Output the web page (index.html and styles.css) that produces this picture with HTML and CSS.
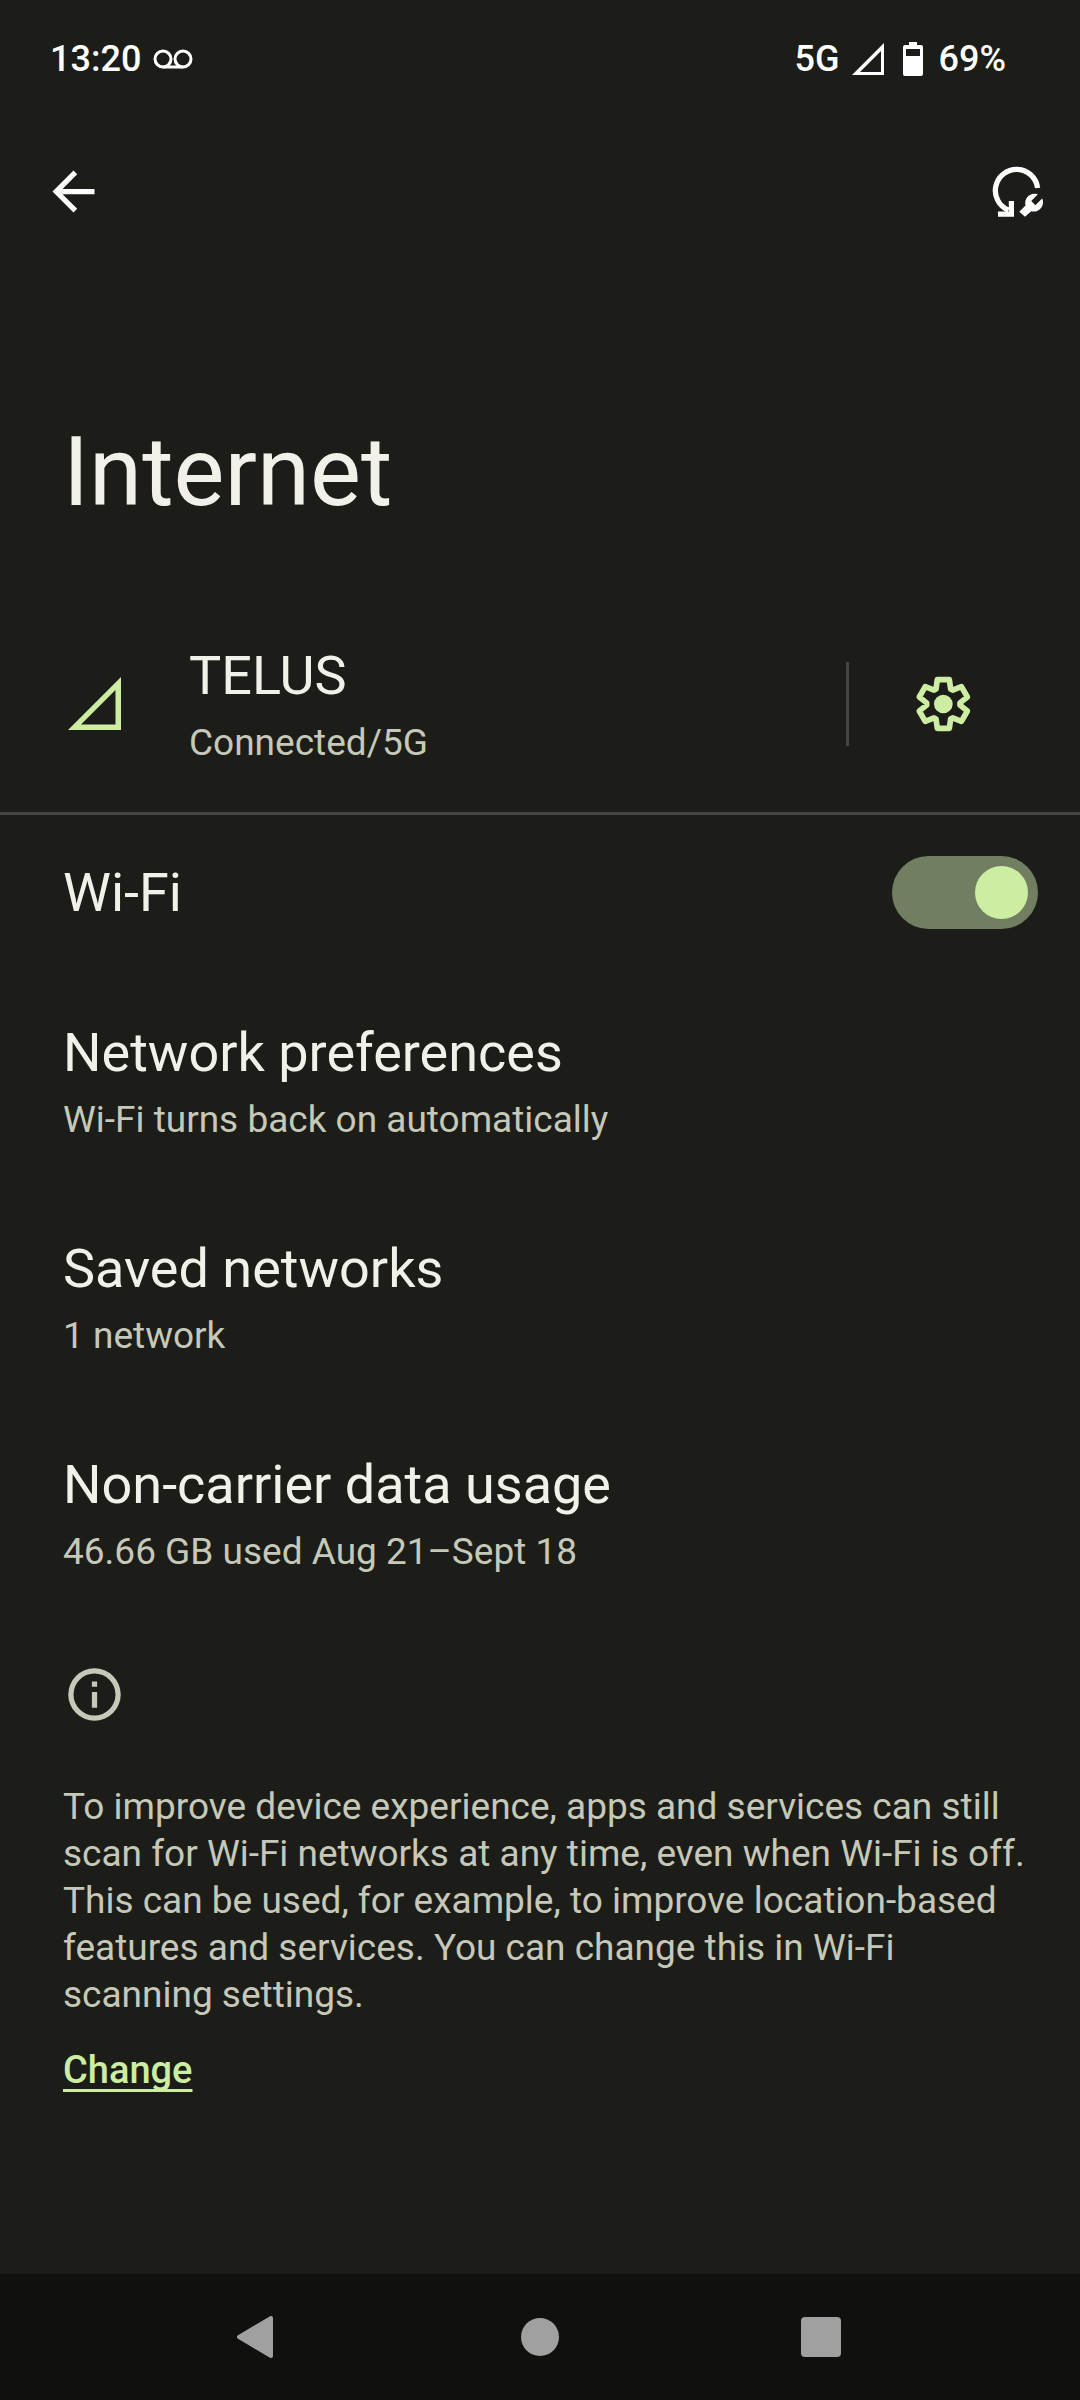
FILE: index.html
```html
<!DOCTYPE html>
<html lang="en">
<head>
<meta charset="utf-8">
<meta name="viewport" content="width=device-width, initial-scale=1">
<title>Internet</title>
<link rel="stylesheet" href="styles.css">
</head>
<body>
<div class="screen">
  <div class="status">
    <span class="status-text">13:20</span>
    <svg class="voicemail" viewBox="0 0 40 20" aria-hidden="true"><g fill="none" stroke="currentColor" stroke-width="3"><circle cx="10" cy="10" r="8"/><circle cx="30" cy="10" r="8"/><path d="M10 18h20"/></g></svg>
    <div class="status-right">
      <span class="status-text">5G</span>
      <svg class="signal-small" viewBox="0 0 32 32" aria-hidden="true"><path fill="currentColor" fill-rule="evenodd" d="M0 32L32 0v32zM8 29h21V8z"/></svg>
      <svg class="battery" viewBox="0 0 20 34" aria-hidden="true"><path fill="currentColor" fill-rule="evenodd" d="M6 0h8v3h4q2 0 2 2v27q0 2-2 2H2q-2 0-2-2V5q0-2 2-2h4zM3 7v7h14V7z"/></svg>
      <span class="status-text">69%</span>
    </div>
  </div>

  <header class="toolbar">
    <button class="icon-button" aria-label="Back">
      <svg class="icon" viewBox="0 0 24 24"><path fill="currentColor" d="M20 11H7.83l5.59-5.59L12 4l-8 8 8 8 1.41-1.41L7.83 13H20z"/></svg>
    </button>
    <button class="icon-button" aria-label="Reset internet">
      <svg class="icon" viewBox="0 0 63 63">
        <path fill="none" stroke="currentColor" stroke-width="5.3" d="M51.600 28A21.200 21.200 0 1 0 22.500 50.200"/>
        <path fill="currentColor" d="M22.800 41H28v15.700H12v-5.200h10.800z"/>
        <path fill="currentColor" d="M33.300 51.700l6.200-6.200c-1.700-7 4.500-13.300 11.500-11.400l.7.300-6.500 6.600 4.200 4.200 6.700-6.700.6 1.200c2 7.200-4.600 13.400-11.500 11.600L39 56.700z"/>
      </svg>
    </button>
  </header>

  <main>
    <h1 class="title">Internet</h1>

    <section class="row carrier">
      <svg class="icon accent" viewBox="0 0 63 63" aria-hidden="true"><path fill="currentColor" fill-rule="evenodd" d="M5 58L58 5v53zM18 52.500h34.500V18z"/></svg>
      <div class="row-text">
        <h2 class="row-title">TELUS</h2>
        <p class="row-summary">Connected/5G</p>
      </div>
      <button class="settings" aria-label="TELUS settings">
        <svg class="icon" viewBox="-94 -96 189 189"><path fill="none" stroke="currentColor" stroke-width="17" stroke-linejoin="round" d="M-18-73H18L22-45 28-41.600 54.200-52.100 72.200-20.900 50-3.400V3.400L72.200 20.900 54.200 52.100 28 41.600 22 45 18 73H-18L-22 45-28 41.600-54.200 52.100-72.200 20.900-50 3.400V-3.400L-72.200-20.900-54.200-52.100-28-41.600-22-45z"/><circle r="28" fill="currentColor"/></svg>
      </button>
    </section>

    <label class="row wifi">
      <span class="row-title">Wi-Fi</span>
      <input class="switch" type="checkbox" role="switch" checked>
    </label>

    <section class="row">
      <div class="row-text">
        <h2 class="row-title">Network preferences</h2>
        <p class="row-summary">Wi‑Fi turns back on automatically</p>
      </div>
    </section>
    <section class="row">
      <div class="row-text">
        <h2 class="row-title">Saved networks</h2>
        <p class="row-summary">1 network</p>
      </div>
    </section>
    <section class="row">
      <div class="row-text">
        <h2 class="row-title">Non-carrier data usage</h2>
        <p class="row-summary">46.66 GB used Aug 21–Sept 18</p>
      </div>
    </section>

    <section class="info">
      <svg class="icon" viewBox="0 0 24 24" aria-hidden="true"><path fill="currentColor" d="M11 7h2v2h-2zm0 4h2v6h-2zm1-9a10 10 0 1 0 0 20 10 10 0 0 0 0-20zm0 18a8 8 0 1 1 0-16 8 8 0 0 1 0 16z"/></svg>
      <p class="info-text">To improve device experience, apps and services can still scan for Wi‑Fi networks at any time, even when Wi‑Fi is off. This can be used, for example, to improve location-based features and services. You can change this in Wi‑Fi scanning settings.</p>
      <a class="change" href="#">Change</a>
    </section>
  </main>

  <nav class="navbar">
    <button class="nav-button" aria-label="Back"><svg class="nav-icon" viewBox="0 0 42 42"><path fill="currentColor" stroke="currentColor" stroke-width="4" stroke-linejoin="round" d="M1 21L33 2v38z"/></svg></button>
    <button class="nav-button" aria-label="Home"><svg class="nav-icon" viewBox="0 0 42 42"><circle cx="21" cy="21" r="19" fill="currentColor"/></svg></button>
    <button class="nav-button" aria-label="Overview"><svg class="nav-icon" viewBox="0 0 42 42"><rect x="1" y="1" width="40" height="40" rx="4" fill="currentColor"/></svg></button>
  </nav>
</div>
</body>
</html>
```
FILE: styles.css
```css
:root {
  --bg: #1c1d18;
  --nav-bg: #10110e;
  --text: #f2f1e9;
  --muted: #c6c8b9;
  --accent: #cdeda3;
  --track: #727e62;
  --line: #464743;
}

* { box-sizing: border-box; }

body {
  margin: 0;
  background: var(--bg);
  color: var(--text);
  font-family: Roboto, "Noto Sans", sans-serif;
}

h1, h2, p { margin: 0; font-weight: 400; }

button {
  display: flex;
  align-items: center;
  justify-content: center;
  padding: 0;
  border: 0;
  background: none;
  color: inherit;
}

svg { display: block; flex: none; overflow: visible; }

.screen {
  display: flex;
  flex-direction: column;
  min-height: 100vh;
}

.status {
  display: flex;
  align-items: center;
  height: 118px;
  padding: 0 74px 0 50px;
  color: #fff;
}

.status-text {
  font-size: 36px;
  line-height: 48px;
  font-weight: 500;
}

.status-right {
  display: flex;
  align-items: center;
  margin-left: auto;
}

.voicemail { width: 40px; height: 20px; margin-left: 12px; }
.signal-small { width: 32px; height: 32px; margin: 0 19px 0 12px; }
.battery { width: 20px; height: 34px; margin-right: 16px; }

.toolbar {
  display: flex;
  align-items: center;
  justify-content: space-between;
  height: 147px;
  padding: 0 31px 0 42px;
  color: #fff;
}

.icon { width: 63px; height: 63px; }

.title {
  padding: 0 63px;
  margin: 151px 0 68px;
  font-size: 96px;
  line-height: 112px;
}

.row {
  display: flex;
  align-items: center;
  padding: 45px 42px 46px 63px;
}

.row-text { flex: 1; }

.row-title {
  font-size: 54px;
  line-height: 70px;
}

.row-summary {
  margin-top: 8px;
  color: var(--muted);
  font-size: 37px;
  line-height: 47px;
}

.carrier {
  gap: 63px;
  border-bottom: 3px solid var(--line);
}

.accent { color: var(--accent); }

.settings {
  width: 192px;
  height: 84px;
  border-left: 3px solid var(--line);
  color: var(--accent);
}

.wifi {
  justify-content: space-between;
  padding-top: 41px;
  padding-bottom: 44px;
}

.switch {
  display: flex;
  align-items: center;
  justify-content: flex-end;
  width: 146px;
  height: 73px;
  margin: 0;
  padding: 10px;
  border-radius: 37px;
  appearance: none;
  background: var(--track);
}

.switch::before {
  content: "";
  width: 53px;
  height: 53px;
  border-radius: 50%;
  background: var(--accent);
}

.switch:not(:checked) { justify-content: flex-start; }

.info {
  padding: 42px 42px 48px 63px;
  color: var(--muted);
}

.info-text {
  margin: 57px 0 29px;
  font-size: 37px;
  line-height: 47px;
}

.change {
  color: var(--accent);
  font-size: 38px;
  line-height: 47px;
  font-weight: 500;
  text-decoration: underline;
  text-decoration-thickness: 3px;
  text-decoration-skip-ink: none;
  text-underline-offset: 6px;
}

.navbar {
  display: flex;
  justify-content: center;
  gap: 70px;
  height: 126px;
  margin-top: auto;
  background: var(--nav-bg);
  color: #a0a0a0;
}

.nav-button { width: 211px; }
.nav-icon { width: 42px; height: 42px; }
```
